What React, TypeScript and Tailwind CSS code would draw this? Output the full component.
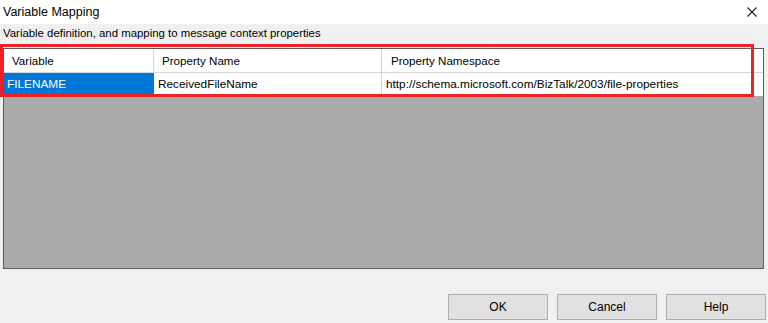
import React from "react";

const FONT = { fontFamily: '"Segoe UI", "Liberation Sans", Arial, sans-serif' };

function DialogButton({ label }: { label: string }) {
  return (
    <button className="w-[100px] h-[26px] bg-[#e1e1e1] border border-[#adadad] text-[12px] text-black flex items-center justify-center">
      {label}
    </button>
  );
}

export default function App() {
  return (
    <div className="relative w-[768px] h-[323px] bg-[#f0f0f0] overflow-hidden text-black" style={FONT}>
      {/* Title bar */}
      <div className="h-[24px] bg-white flex items-center justify-between pl-[3px] pr-[11px]">
        <span className="text-[12.5px] leading-none">Variable Mapping</span>
        <svg width="10" height="10" viewBox="0 0 10 10" className="text-[#222]">
          <path d="M0.5 0.5 L9.5 9.5 M9.5 0.5 L0.5 9.5" stroke="currentColor" strokeWidth="1.1" />
        </svg>
      </div>

      {/* Description */}
      <div className="h-[20px] flex items-center pl-[3px] text-[11.4px]">
        Variable definition, and mapping to message context properties
      </div>

      {/* Grid */}
      <div className="ml-[3px] mt-[4px] w-[761px] h-[221px] border border-[#5c5c5c] bg-[#ababab] flex flex-col">
        <div className="h-[24px] bg-white flex border-b border-[#d6d6d6] text-[11.6px]">
          <div className="w-[150px] border-r border-[#d6d6d6] flex items-center pl-[8px]">Variable</div>
          <div className="w-[228px] border-r border-[#d6d6d6] flex items-center pl-[8px]">Property Name</div>
          <div className="flex-1 flex items-center pl-[9px]">Property Namespace</div>
        </div>
        <div className="h-[23px] bg-white flex text-[11.8px]">
          <div className="w-[150px] bg-[#0078d7] text-white flex items-center pl-[3px]">FILENAME</div>
          <div className="w-[228px] border-r border-[#d6d6d6] flex items-center pl-[4px]">ReceivedFileName</div>
          <div className="flex-1 flex items-center pl-[4px]">http://schema.microsoft.com/BizTalk/2003/file-properties</div>
        </div>
      </div>

      {/* Buttons */}
      <div className="mt-[25px] flex justify-end gap-[9px] pr-[2px]">
        <DialogButton label="OK" />
        <DialogButton label="Cancel" />
        <DialogButton label="Help" />
      </div>

      {/* Red highlight annotation */}
      <div className="absolute left-0 top-[44px] w-[754px] h-[53px] border-[3px] border-[#ec2228] pointer-events-none" />
    </div>
  );
}
